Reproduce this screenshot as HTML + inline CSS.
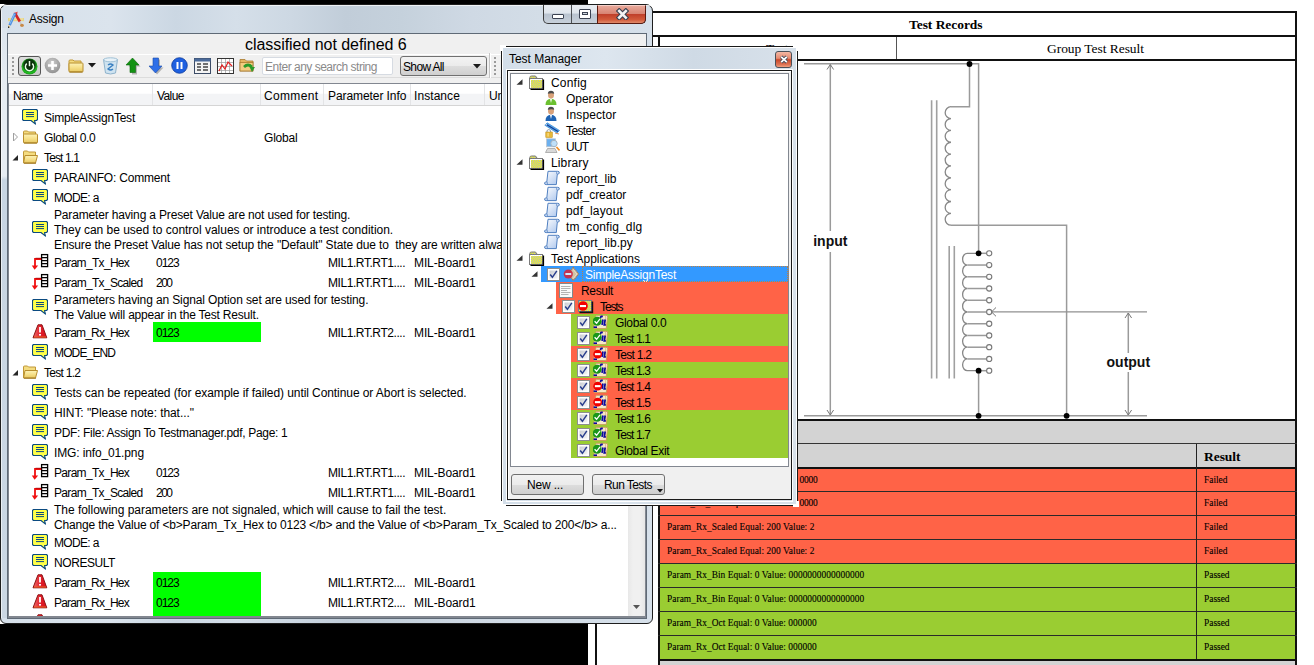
<!DOCTYPE html>
<html><head><meta charset="utf-8">
<style>
*{box-sizing:border-box;margin:0;padding:0}
html,body{width:1314px;height:665px;overflow:hidden;background:#fff;position:relative;font-family:"Liberation Sans",sans-serif;font-size:12px;color:#000}
.a{position:absolute}
.t{position:absolute;white-space:pre;line-height:15px;letter-spacing:-0.05px}
/* PDF */
#pdf{position:absolute;left:0;top:0;width:1314px;height:665px}
.ps{font-family:"Liberation Serif",serif}
.hl{position:absolute;background:#111}
.pr{position:absolute;left:660px;width:635px;height:23px}
.pr .tx{position:absolute;left:7px;top:5.5px;font-family:"Liberation Serif",serif;font-size:9.4px;white-space:pre;color:#000;-webkit-text-stroke:0.1px #000}
.pr .rs{position:absolute;left:544px;top:5.5px;font-family:"Liberation Serif",serif;font-size:9.4px;white-space:pre;color:#000;-webkit-text-stroke:0.1px #000}
.red{background:#ff6347}
.grn{background:#9acd32}
/* window */
.win{position:absolute;border:1px solid #1e1e1e;background:linear-gradient(90deg,#d5dfe9,#dce5ee 30%,#cfdae5 60%,#d6e0ea);border-radius:6px}
</style></head>
<body>
<svg width="0" height="0" style="position:absolute">
<defs>
  <linearGradient id="gfold" x1="0" y1="0" x2="0" y2="1"><stop offset="0" stop-color="#fdf3b8"/><stop offset="0.5" stop-color="#f6e08a"/><stop offset="1" stop-color="#e8c860"/></linearGradient>
 <linearGradient id="gwarn" x1="0" y1="0" x2="1" y2="0"><stop offset="0" stop-color="#f07070"/><stop offset="0.5" stop-color="#e0202c"/><stop offset="1" stop-color="#d8101c"/></linearGradient>
 <symbol id="ibub" viewBox="0 0 16 16">
  <path d="M1.5,0.5 H14.5 L15.5,1.5 V10.5 L14.5,11.5 H12.5 L13.5,15.2 L9,11.5 H1.5 L0.5,10.5 V1.5 Z" fill="#ffff48" stroke="#0b4a80" stroke-width="1.1" stroke-linejoin="round"/>
  <path d="M4,3.5 H12 M4,5.5 H12 M4,7.6 H12" stroke="#0b4a80" stroke-width="1"/>
 </symbol>
 <symbol id="ifold" viewBox="0 0 16 16">
  <path d="M1.5,12.5 V3 Q1.5,2 2.5,2 H5.5 L6.5,3 H13.5 V12.5 Z" fill="#f4dc80" stroke="#c09838" stroke-width="1"/>
  <rect x="1.5" y="5" width="14" height="9" rx="0.8" fill="url(#gfold)" stroke="#b88e2e" stroke-width="1"/>
  <path d="M2,14 H15" stroke="#a07820" stroke-width="1"/>
 </symbol>
 <symbol id="ifoldo" viewBox="0 0 16 16">
  <path d="M1.5,13 V3 Q1.5,2 2.5,2 H5.5 L6.5,3 H13.5 V7 Z" fill="#f4dc80" stroke="#c09838" stroke-width="1"/>
  <path d="M1.5,14 L3,6.5 H15.5 L13.5,14 Z" fill="url(#gfold)" stroke="#b88e2e" stroke-width="1" stroke-linejoin="round"/>
  <path d="M2,14.2 H14" stroke="#a07820" stroke-width="1"/>
 </symbol>
 <symbol id="itx" viewBox="0 0 20 20">
  <rect x="12.6" y="2.6" width="6" height="12" fill="#fff" stroke="#000" stroke-width="1.3"/>
  <path d="M12.6,5.6 H18.6 M12.6,8.6 H18.6 M12.6,11.6 H18.6" stroke="#000" stroke-width="1.1"/>
  <path d="M12.2,7 H6 V14.2" fill="none" stroke="#f01010" stroke-width="1.8"/>
  <path d="M2.8,13.6 H9.2 L5.6,17.8 Z" fill="#f01010"/>
  <path d="M6.5,6.2 H12" stroke="#8a0000" stroke-width="0.6"/>
 </symbol>
 <symbol id="iwarn" viewBox="0 0 20 20">
  <path d="M9,2.8 H13 L17.8,15.8 H4 Z" fill="url(#gwarn)" stroke="#8e1414" stroke-width="1" stroke-linejoin="round"/>
  <path d="M5,15 H17" stroke="#f06020" stroke-width="1"/>
  <path d="M11,5 V10.5" stroke="#fff" stroke-width="1.8"/>
  <rect x="10" y="12" width="2" height="1.6" fill="#fff"/>
 </symbol>
 <symbol id="tric" viewBox="0 0 8 10"><path d="M1.5,1 L5.5,5 L1.5,9 Z" fill="none" stroke="#a0a0a0" stroke-width="1"/></symbol>
 <symbol id="trio" viewBox="0 0 8 8"><path d="M6,1 V6.5 H0.5 Z" fill="#262626"/></symbol>
</defs>
</svg>
<svg width="0" height="0" style="position:absolute">
<defs>
 <pattern id="pchk" width="2" height="2" patternUnits="userSpaceOnUse"><rect width="2" height="2" fill="#ffff10"/><rect width="1" height="1" fill="#aab0c4"/><rect x="1" y="1" width="1" height="1" fill="#aab0c4"/></pattern>
 <linearGradient id="gscroll" x1="0" y1="0" x2="1" y2="1"><stop offset="0" stop-color="#fff"/><stop offset="1" stop-color="#a9c4ec"/></linearGradient>
 <linearGradient id="gcb" x1="0" y1="0" x2="1" y2="1"><stop offset="0" stop-color="#c9ccd2"/><stop offset="1" stop-color="#f6f6f6"/></linearGradient>
 <symbol id="tfold" viewBox="0 0 16 16">
  <path d="M0.8,3.5 V2.5 Q0.8,1 2.5,1 H6.5 L8.2,3.2" fill="url(#pchk)" stroke="#787878" stroke-width="1"/>
  <rect x="0.5" y="3.5" width="13" height="10" fill="url(#pchk)" stroke="#7a7a7a"/>
  <path d="M1.5,13 V4.5 H13" fill="none" stroke="#fff" stroke-width="1"/>
  <path d="M1.5,14.4 H14.4 V4.5" fill="none" stroke="#000" stroke-width="1.4"/>
 </symbol>
 <symbol id="ttri" viewBox="0 0 7 6"><path d="M6.5,0.3 V5.7 H0.5 Z" fill="#333"/></symbol>
 <symbol id="tperg" viewBox="0 0 12 16">
  <ellipse cx="6" cy="5" rx="3" ry="3.6" fill="#d9a27a"/><path d="M2.8,3.8 Q3,0.8 6,0.8 Q9,0.8 9.2,3.8 Q7,2.6 2.8,3.8 Z" fill="#4a4a4a"/>
  <path d="M0.5,15 Q0.5,9 6,8.8 Q11.5,9 11.5,15 Z" fill="#6cc030"/><path d="M5,9 L6,13 L7,9 Z" fill="#fff"/>
 </symbol>
 <symbol id="tperb" viewBox="0 0 12 16">
  <ellipse cx="6" cy="5" rx="3" ry="3.6" fill="#d9a27a"/><path d="M2.8,3.8 Q3,0.8 6,0.8 Q9,0.8 9.2,3.8 Q7,2.6 2.8,3.8 Z" fill="#4a4a4a"/>
  <path d="M0.5,15 Q0.5,9 6,8.8 Q11.5,9 11.5,15 Z" fill="#1f64b4"/><path d="M5,9 L6,13 L7,9 Z" fill="#fff"/>
 </symbol>
 <symbol id="ttester" viewBox="0 0 16 16">
  <path d="M0.8,3.2 L3.2,0.8 L15.5,8.5 L13,11 Z" fill="#58aef0" stroke="#2a78c8" stroke-width="0.6"/>
  <path d="M2.5,2.5 L14,9.5" stroke="#1a3a90" stroke-width="1.2"/>
  <path d="M1.5,2 L3,3" stroke="#fff" stroke-width="0.8"/>
  <path d="M11,11 L15,12" stroke="#e09050" stroke-width="1"/>
  <path d="M3,10 V8.5 Q4.8,6.5 6.6,8.5 V10" fill="none" stroke="#8a9aaa" stroke-width="1"/>
  <rect x="1.8" y="10" width="6.6" height="5.5" fill="#e8b838" stroke="#b88a18" stroke-width="0.5"/>
  <rect x="3.5" y="11" width="1.2" height="3.5" fill="#f8e090"/>
 </symbol>
 <symbol id="tuut" viewBox="0 0 16 16">
  <rect x="2.5" y="0.8" width="9" height="8" fill="#6cb0ee" stroke="#c0c8d0" stroke-width="0.8"/>
  <circle cx="10" cy="5.5" r="3.2" fill="#bfe0fa" stroke="#a8b4c0" stroke-width="1"/>
  <path d="M1.5,14.5 L3.5,10.5 H11 L13,14.5 Z" fill="#d8d8d8" stroke="#9a9a9a" stroke-width="0.7"/>
  <path d="M12.5,9 L15.5,12.5" stroke="#f08a20" stroke-width="1.6"/>
 </symbol>
 <symbol id="tscroll" viewBox="0 0 16 16">
  <path d="M4,1.3 H13.6 Q15.6,1.3 15.3,3 Q15,4.3 13.3,4.1 L12.3,14.6 H2.2 Q0.3,14.6 0.6,12.9 Q0.9,11.7 2.8,11.9 Z" fill="url(#gscroll)" stroke="#4f7fc0" stroke-width="1"/>
  <path d="M13.3,4.1 Q12.2,3.8 12.6,2.2" fill="none" stroke="#4f7fc0" stroke-width="0.8"/>
  <path d="M2.8,11.9 Q3.8,12.6 3.2,14.3" fill="none" stroke="#4f7fc0" stroke-width="0.8"/>
 </symbol>
 <symbol id="tcb" viewBox="0 0 13 13">
  <rect x="0.5" y="0.5" width="12" height="12" fill="#fff" stroke="#8e8f8f"/>
  <rect x="2.5" y="2.5" width="8" height="8" fill="url(#gcb)"/>
  <path d="M3.2,6.5 L5.4,9.3 L9.8,2.8" fill="none" stroke="#2a3f8e" stroke-width="1.5"/>
 </symbol>
 <symbol id="tstopd" viewBox="0 0 16 16">
  <path d="M10.3,1.5 L15.5,8 L10.3,14.5 L5,8 Z" fill="#d0c4a8" stroke="#b07a48" stroke-width="1.1" stroke-dasharray="1.2 0.7"/>
  <path d="M10.3,3.5 L13.8,8 L10.3,12.5" fill="none" stroke="#e8e0cc" stroke-width="1"/>
  <circle cx="5.3" cy="8" r="4.6" fill="#cc2a46" opacity="0.92"/>
  <rect x="2.4" y="7" width="5.8" height="2" fill="#cfe8ff"/>
 </symbol>
 <symbol id="tdoc" viewBox="0 0 14 15">
  <rect x="0.5" y="0.5" width="13" height="14" fill="#fafafa" stroke="#7e8a90"/>
  <path d="M2,3.5 H11.5 M2,5.5 H11.5 M2,7.5 H8 M2,9.5 H11.5 M2,11.5 H9.5" stroke="#b4b4b4" stroke-width="1"/>
 </symbol>
 <symbol id="tstopf" viewBox="0 0 16 16">
  <rect x="0.5" y="2.5" width="13" height="11" fill="url(#pchk)" stroke="#7a8088"/>
  <path d="M1.5,14.4 H14.4 V3.5" fill="none" stroke="#111" stroke-width="1.6"/>
  <circle cx="5" cy="8" r="4.8" fill="#f40000"/>
  <rect x="2" y="7" width="6" height="2.1" fill="#fff"/>
 </symbol>
 <symbol id="tsmok" viewBox="0 0 16 16">
  <path d="M3.5,1.3 H13 Q15.2,1.3 14.6,3.5 L13.2,14.6 H2 Q0.4,14.6 0.9,13 L2.8,2.5 Q3,1.3 3.5,1.3 Z" fill="#f6e8c8" stroke="#c89a58" stroke-width="0.9"/>
  <path d="M12.6,2 V12" stroke="#d8b070" stroke-width="0.7"/>
  <path d="M9.8,2.6 Q7.4,1.8 7.6,4.2" fill="none" stroke="#0a0aa0" stroke-width="1.8"/>
  <path d="M10,5.5 L9,10.8 M12.2,5.5 L11.2,10.8 H12.8" fill="none" stroke="#0a0aa0" stroke-width="1.7"/>
  <path d="M0.6,13.2 H4" stroke="#0a0aa0" stroke-width="1.6"/>
  <circle cx="4.2" cy="7.3" r="4.5" fill="#1a961a"/>
  <path d="M1.6,7.3 L3.6,9.3 L7,4.8" fill="none" stroke="#fff" stroke-width="1.3"/>
 </symbol>
 <symbol id="tsmfail" viewBox="0 0 16 16">
  <path d="M3.5,1.3 H13 Q15.2,1.3 14.6,3.5 L13.2,14.6 H2 Q0.4,14.6 0.9,13 L2.8,2.5 Q3,1.3 3.5,1.3 Z" fill="#f6e8c8" stroke="#c89a58" stroke-width="0.9"/>
  <path d="M12.6,2 V12" stroke="#d8b070" stroke-width="0.7"/>
  <path d="M9.8,2.6 Q7.4,1.8 7.6,4.2" fill="none" stroke="#0a0aa0" stroke-width="1.8"/>
  <path d="M10,5.5 L9,10.8 M12.2,5.5 L11.2,10.8 H12.8" fill="none" stroke="#0a0aa0" stroke-width="1.7"/>
  <path d="M0.6,13.2 H4" stroke="#0a0aa0" stroke-width="1.6"/>
  <circle cx="4.7" cy="8.2" r="4.4" fill="#f00000"/>
  <rect x="1.9" y="7.1" width="5.6" height="2.1" fill="#fff"/>
 </symbol>
</defs>
</svg>

<!-- background pieces -->
<div class="a" style="left:0;top:0;width:588px;height:4px;background:#000"></div>
<div class="a" style="left:0;top:624px;width:588px;height:41px;background:#000"></div>
<div class="a" style="left:595px;top:624px;width:2px;height:41px;background:#111"></div>

<!-- PDF table -->
<div id="pdf">
  <div class="hl" style="left:652px;top:11px;width:645px;height:2px"></div>
  <div class="hl" style="left:658px;top:35px;width:2px;height:630px"></div>
  <div class="hl" style="left:1295px;top:11px;width:2px;height:654px"></div>
  <div class="t ps" style="left:909px;top:17px;font-size:13.5px;font-weight:bold;line-height:16px">Test Records</div>
  <div class="hl" style="left:652px;top:35px;width:645px;height:2px"></div>
  <div class="a" style="left:896px;top:37px;width:1px;height:22px;background:#555"></div>
  <div class="t ps" id="testhdr" style="left:766px;top:41px;font-size:13.5px;line-height:16px">Test</div>
  <div class="t ps" style="left:1047px;top:41px;font-size:13.5px;line-height:16px">Group Test Result</div>
  <div class="hl" style="left:658px;top:59px;width:639px;height:2px"></div>
  <!-- diagram placeholder -->
  <svg class="a" style="left:0;top:0" width="1314" height="665" id="diag">
<path d="M804,63.8 H978.6 V253.3" stroke="#9a9a9a" stroke-width="1.5" fill="none"/>
<path d="M830.3,64.5 L830.3,231" stroke="#9a9a9a" stroke-width="1.5" fill="none"/>
<path d="M830.3,252 L830.3,415" stroke="#9a9a9a" stroke-width="1.5" fill="none"/>
<path d="M827,69.5 L830.3,64.5 L833.6,69.5" stroke="#777" stroke-width="1" fill="none"/>
<path d="M827,410 L830.3,415 L833.6,410" stroke="#777" stroke-width="1" fill="none"/>
<path d="M969.5,64 V106.7 H951" stroke="#9a9a9a" stroke-width="1.5" fill="none"/>
<path d="M951,106.7 A5.8,5.9 0 0 0 951,118.55 A5.8,5.9 0 0 0 951,130.40 A5.8,5.9 0 0 0 951,142.25 A5.8,5.9 0 0 0 951,154.10 A5.8,5.9 0 0 0 951,165.95 A5.8,5.9 0 0 0 951,177.80 A5.8,5.9 0 0 0 951,189.65 A5.8,5.9 0 0 0 951,201.50 A5.8,5.9 0 0 0 951,213.35 A5.8,5.9 0 0 0 951,225.20" stroke="#888" stroke-width="1.3" fill="none"/>
<path d="M951,225.2 H1066.6 V415.8" stroke="#9a9a9a" stroke-width="1.5" fill="none"/>
<path d="M931.6,100.3 L931.6,378.5" stroke="#a0a0a0" stroke-width="1.6" fill="none"/>
<path d="M936.7,100.3 L936.7,378.5" stroke="#a0a0a0" stroke-width="1.6" fill="none"/>
<path d="M949.2,246 L949.2,378.5" stroke="#a0a0a0" stroke-width="1.6" fill="none"/>
<path d="M954.3,246 L954.3,378.5" stroke="#a0a0a0" stroke-width="1.6" fill="none"/>
<path d="M978.6,253.3 H967.3 A4.7,5.87 0 0 0 967.3,265.04 A4.7,5.87 0 0 0 967.3,276.78 A4.7,5.87 0 0 0 967.3,288.52 A4.7,5.87 0 0 0 967.3,300.26 A4.7,5.87 0 0 0 967.3,312.00 A4.7,5.87 0 0 0 967.3,323.74 A4.7,5.87 0 0 0 967.3,335.48 A4.7,5.87 0 0 0 967.3,347.22 A4.7,5.87 0 0 0 967.3,358.96 A4.7,5.87 0 0 0 967.3,370.70 H978.6" stroke="#888" stroke-width="1.3" fill="none"/>
<path d="M978.6,253.3 L986.5,253.3" stroke="#9a9a9a" stroke-width="1.5" fill="none"/>
<circle cx="989.2" cy="253.30" r="2.6" fill="#fff" stroke="#777" stroke-width="1.1"/>
<path d="M967.3,265.04 L986.5,265.04" stroke="#9a9a9a" stroke-width="1.5" fill="none"/>
<circle cx="989.2" cy="265.04" r="2.6" fill="#fff" stroke="#777" stroke-width="1.1"/>
<path d="M967.3,276.78000000000003 L986.5,276.78000000000003" stroke="#9a9a9a" stroke-width="1.5" fill="none"/>
<circle cx="989.2" cy="276.78" r="2.6" fill="#fff" stroke="#777" stroke-width="1.1"/>
<path d="M967.3,288.52 L986.5,288.52" stroke="#9a9a9a" stroke-width="1.5" fill="none"/>
<circle cx="989.2" cy="288.52" r="2.6" fill="#fff" stroke="#777" stroke-width="1.1"/>
<path d="M967.3,300.26 L986.5,300.26" stroke="#9a9a9a" stroke-width="1.5" fill="none"/>
<circle cx="989.2" cy="300.26" r="2.6" fill="#fff" stroke="#777" stroke-width="1.1"/>
<path d="M967.3,312.0 L986.5,312.0" stroke="#9a9a9a" stroke-width="1.5" fill="none"/>
<circle cx="989.2" cy="312.00" r="2.6" fill="#fff" stroke="#777" stroke-width="1.1"/>
<path d="M967.3,323.74 L986.5,323.74" stroke="#9a9a9a" stroke-width="1.5" fill="none"/>
<circle cx="989.2" cy="323.74" r="2.6" fill="#fff" stroke="#777" stroke-width="1.1"/>
<path d="M967.3,335.48 L986.5,335.48" stroke="#9a9a9a" stroke-width="1.5" fill="none"/>
<circle cx="989.2" cy="335.48" r="2.6" fill="#fff" stroke="#777" stroke-width="1.1"/>
<path d="M967.3,347.22 L986.5,347.22" stroke="#9a9a9a" stroke-width="1.5" fill="none"/>
<circle cx="989.2" cy="347.22" r="2.6" fill="#fff" stroke="#777" stroke-width="1.1"/>
<path d="M967.3,358.96000000000004 L986.5,358.96000000000004" stroke="#9a9a9a" stroke-width="1.5" fill="none"/>
<circle cx="989.2" cy="358.96" r="2.6" fill="#fff" stroke="#777" stroke-width="1.1"/>
<path d="M978.6,370.70000000000005 L986.5,370.70000000000005" stroke="#9a9a9a" stroke-width="1.5" fill="none"/>
<circle cx="989.2" cy="370.70" r="2.6" fill="#fff" stroke="#777" stroke-width="1.1"/>
<path d="M978.6,370.7 L978.6,415.8" stroke="#9a9a9a" stroke-width="1.5" fill="none"/>
<path d="M992,311.9 L1147,311.9" stroke="#909090" stroke-width="1.2" fill="none"/>
<path d="M996,307.5 L991.5,311.9 L996,316.3" stroke="#777" stroke-width="1" fill="none"/>
<path d="M1128.3,313 L1128.3,353" stroke="#9a9a9a" stroke-width="1.5" fill="none"/>
<path d="M1128.3,372 L1128.3,415" stroke="#9a9a9a" stroke-width="1.5" fill="none"/>
<path d="M1125,318 L1128.3,313 L1131.6,318" stroke="#777" stroke-width="1" fill="none"/>
<path d="M1125,410 L1128.3,415 L1131.6,410" stroke="#777" stroke-width="1" fill="none"/>
<path d="M804,415.8 H1147" stroke="#9a9a9a" stroke-width="1.6" fill="none"/>
<circle cx="969.5" cy="64" r="2.9" fill="#000"/>
<circle cx="978.6" cy="253.3" r="2.9" fill="#000"/>
<circle cx="978.6" cy="370.7" r="2.9" fill="#000"/>
<circle cx="978.6" cy="415.8" r="2.9" fill="#000"/>
<circle cx="1066.6" cy="415.8" r="2.9" fill="#000"/>
<text x="830.3" y="246.3" text-anchor="middle" font-family="Liberation Sans" font-weight="bold" font-size="14" fill="#111">input</text>
<text x="1128.3" y="366.7" text-anchor="middle" font-family="Liberation Sans" font-weight="bold" font-size="14" fill="#111">output</text>
</svg>
  <div class="hl" style="left:658px;top:419px;width:639px;height:2px"></div>
  <div class="a" style="left:660px;top:421px;width:635px;height:22px;background:#d3d3d3"></div>
  <div class="hl" style="left:658px;top:443px;width:639px;height:1px;background:#333"></div>
  <div class="a" style="left:660px;top:444px;width:635px;height:23px;background:#d3d3d3"></div>
  <div class="t ps" style="left:1204px;top:449px;font-size:13.5px;font-weight:bold;line-height:16px">Result</div>
  <div class="hl" style="left:658px;top:467px;width:639px;height:2px"></div>
  <div class="pr red" style="top:469px"><div class="tx" style="letter-spacing:-0.12px">Param_Rx_Hex Equal: 0123 Value: 0000</div><div class="rs">Failed</div></div>
  <div class="pr red" style="top:492px"><div class="tx" style="letter-spacing:-0.12px">Param_Rx_Hex Equal: 0123 Value: 0000</div><div class="rs">Failed</div></div>
  <div class="pr red" style="top:516px"><div class="tx" style="letter-spacing:0.05px">Param_Rx_Scaled Equal: 200 Value: 2</div><div class="rs">Failed</div></div>
  <div class="pr red" style="top:540px"><div class="tx" style="letter-spacing:0.05px">Param_Rx_Scaled Equal: 200 Value: 2</div><div class="rs">Failed</div></div>
  <div class="pr grn" style="top:564px"><div class="tx" style="letter-spacing:0.045px">Param_Rx_Bin Equal: 0 Value: 0000000000000000</div><div class="rs">Passed</div></div>
  <div class="pr grn" style="top:588px"><div class="tx" style="letter-spacing:0.045px">Param_Rx_Bin Equal: 0 Value: 0000000000000000</div><div class="rs">Passed</div></div>
  <div class="pr grn" style="top:612px"><div class="tx" style="letter-spacing:0.04px">Param_Rx_Oct Equal: 0 Value: 000000</div><div class="rs">Passed</div></div>
  <div class="pr grn" style="top:636px"><div class="tx" style="letter-spacing:0.04px">Param_Rx_Oct Equal: 0 Value: 000000</div><div class="rs">Passed</div></div>
  <div class="hl" style="left:658px;top:491px;width:639px;height:1px;background:#2a2a2a"></div>
  <div class="hl" style="left:658px;top:515px;width:639px;height:1px;background:#2a2a2a"></div>
  <div class="hl" style="left:658px;top:539px;width:639px;height:1px;background:#2a2a2a"></div>
  <div class="hl" style="left:658px;top:563px;width:639px;height:1px;background:#2a2a2a"></div>
  <div class="hl" style="left:658px;top:587px;width:639px;height:1px;background:#2a2a2a"></div>
  <div class="hl" style="left:658px;top:611px;width:639px;height:1px;background:#2a2a2a"></div>
  <div class="hl" style="left:658px;top:635px;width:639px;height:1px;background:#2a2a2a"></div>
  <div class="hl" style="left:658px;top:659px;width:639px;height:2px"></div>
  <div class="a" style="left:660px;top:661px;width:635px;height:4px;background:#d3d3d3"></div>
  <div class="a" style="left:1196px;top:444px;width:1px;height:215px;background:#222"></div>
</div>

<!-- ASSIGN WINDOW -->
<div class="win" style="left:0;top:4px;width:653px;height:620px;border-radius:7px 7px 6px 6px;background:linear-gradient(90deg,#d6e0ea 0px,#dbe4ed 110px,#cbd7e3 175px,#d5dfe9 235px,#cdd8e3 290px,#c1cdd9 345px,#c5d1dc 400px,#cfd9e4 470px,#d3dde7 540px,#d6e0ea 653px)"></div>
<div class="a" style="left:1px;top:5px;width:651px;height:1px;background:rgba(255,255,255,.7)"></div>
<div class="a" style="left:1px;top:28px;width:6px;height:590px;background:linear-gradient(#dde5ed 0,#e6ecf2 60px,#e6ecf2 148px,#c8d5e2 152px,#cbd7e3 100%)"></div>
<div class="a" style="left:1px;top:8px;width:1px;height:610px;background:rgba(255,255,255,.6)"></div>
<!-- app icon -->
<svg class="a" style="left:8px;top:11px" width="17" height="17" viewBox="0 0 17 17">
 <rect x="0" y="7" width="16" height="3.2" fill="#e6d588"/>
 <path d="M1,8 H15" stroke="#f4eab8" stroke-width="0.8"/>
 <path d="M11.5,10.5 L13.5,13.5" stroke="#c8c8c8" stroke-width="1.5"/>
 <ellipse cx="14" cy="14.3" rx="1.9" ry="1.6" fill="#c88a48"/>
 <path d="M6.8,2 L11.8,10.5" stroke="#d42424" stroke-width="2.6"/>
 <path d="M5.5,0.8 L7.2,2.2 L9.5,0.4 L9.3,2.8 L7,3" fill="#e02a2a"/>
 <path d="M7.2,2.3 L1.6,14.2" stroke="#4a8ee0" stroke-width="2.6"/>
 <path d="M6.5,3 L2,12.8" stroke="#9cc8f4" stroke-width="0.8"/>
 <path d="M1.6,14.2 L0.6,16.2" stroke="#e8d0a0" stroke-width="2"/>
 <path d="M0.9,15.6 L0.3,16.8" stroke="#222" stroke-width="1.4"/>
</svg>
<div class="t" style="left:29px;top:12px;color:#000"><span style="letter-spacing:-0.200px">Assign</span></div>
<!-- caption buttons -->
<div class="a" style="left:543px;top:5px;width:103px;height:19px;border:1px solid #3c3c3c;border-top:none;border-radius:0 0 5px 5px;overflow:hidden;background:linear-gradient(#e9edf2,#dfe5ec 45%,#b9c3cf 50%,#c7d0da)"></div>
<div class="a" style="left:571px;top:5px;width:1px;height:18px;background:#4b4f54"></div>
<div class="a" style="left:597px;top:5px;width:49px;height:19px;border:1px solid #5a1a10;border-top:1px solid #f6d0c8;border-radius:0 0 5px 0;background:linear-gradient(#e8a89a,#d88472 45%,#c0402a 50%,#d25a3a 80%,#e08a6a)"></div>
<div class="a" style="left:552px;top:14px;width:12px;height:5px;border:1.5px solid #3b4252;border-radius:1px;background:#fff"></div>
<div class="a" style="left:579px;top:9px;width:12px;height:10px;border:1.5px solid #3b4252;border-radius:1px;background:#fff"></div>
<div class="a" style="left:582px;top:12px;width:6px;height:3px;border:1.5px solid #3b4252;background:#cfd6de"></div>
<svg class="a" style="left:616px;top:8px" width="13" height="12" viewBox="0 0 13 12"><path d="M3.2,3 L9.8,9.6 M9.8,3 L3.2,9.6" stroke="#3a4150" stroke-width="4.8" stroke-linecap="square"/><path d="M3.2,3 L9.8,9.6 M9.8,3 L3.2,9.6" stroke="#f4f4f4" stroke-width="2.6" stroke-linecap="square"/></svg>
<!-- client -->
<div class="a" style="left:7px;top:33px;width:640px;height:586px;border:1px solid #5f6a76;background:#f0f0f0"></div>
<div class="t" style="left:245px;top:35px;font-size:16px;line-height:19px">classified not defined 6</div>
<!-- toolbar -->
<div class="a" style="left:8px;top:54px;width:638px;height:1px;background:#fff"></div>
<div class="a" style="left:8px;top:77px;width:638px;height:1px;background:#dcdcdc"></div>
<div class="a" style="left:12px;top:57px;width:2px;height:19px;background:repeating-linear-gradient(#9a9a9a 0 2px,transparent 2px 4px)"></div>
<div class="a" style="left:489px;top:53px;width:1px;height:25px;background:#c4c4c4"></div><div class="a" style="left:490px;top:53px;width:1px;height:25px;background:#fff"></div>
<div class="a" style="left:494px;top:57px;width:2px;height:19px;background:repeating-linear-gradient(#9a9a9a 0 2px,transparent 2px 4px)"></div>
<!-- power button -->
<div class="a" style="left:18px;top:56px;width:23px;height:20px;border:1px solid #555;border-radius:3px;background:linear-gradient(#dedede,#c8c8c8)"></div>
<svg class="a" style="left:21px;top:58px" width="17" height="17" viewBox="0 0 17 17">
 <defs><radialGradient id="gpw" cx="0.5" cy="0.4" r="0.6"><stop offset="0" stop-color="#0a200a"/><stop offset="0.55" stop-color="#0a3a0a"/><stop offset="0.8" stop-color="#22c022"/><stop offset="1" stop-color="#1a9a1a"/></radialGradient>
 <radialGradient id="gpl" cx="0.45" cy="0.35" r="0.7"><stop offset="0" stop-color="#d0d0d0"/><stop offset="1" stop-color="#8c8c8c"/></radialGradient></defs>
 <circle cx="8.5" cy="8.5" r="8" fill="url(#gpw)"/>
 <path d="M5.8,5.6 A4.1,4.1 0 1 0 11.2,5.6" fill="none" stroke="#e8ffe8" stroke-width="1.4"/><path d="M8.5,3 V8.2" stroke="#e8ffe8" stroke-width="1.5"/>
</svg>
<svg class="a" style="left:44px;top:57px" width="17" height="17" viewBox="0 0 17 17">
 <circle cx="8.5" cy="8.5" r="7.8" fill="url(#gpl)"/>
 <path d="M8.5,4 V13 M4,8.5 H13" stroke="#fff" stroke-width="2.6"/>
</svg>
<svg class="a" style="left:67px;top:58px" width="17" height="16"><use href="#ifold"/></svg>
<svg class="a" style="left:88px;top:63px" width="8" height="5"><path d="M0,0 H8 L4,4.5 Z" fill="#1a1a1a"/></svg>
<svg class="a" style="left:102px;top:57px" width="17" height="18" viewBox="0 0 17 18">
 <path d="M1.5,2.5 L3.5,16 Q8.5,18 13.5,16 L15.5,2.5 Z" fill="#cfe3f0" stroke="#8fb3cc" stroke-width="1"/>
 <ellipse cx="8.5" cy="2.8" rx="7" ry="2" fill="#e8f2f8" stroke="#9fc0d6"/>
 <path d="M6,8 Q8.5,6 11,8 Q8.5,10 6,12 Q8.5,14 11,12" fill="none" stroke="#3a7fc0" stroke-width="1.4"/>
</svg>
<svg class="a" style="left:125px;top:57px" width="18" height="19" viewBox="0 0 18 19">
 <path d="M9,2.5 L15.5,9.5 H12 V17.5 H7 V9.5 H3.5 Z" fill="#9a9a9a" opacity="0.7"/>
 <path d="M7.5,1 L14,8 H10.5 V15.5 H5 V8 H1 Z" fill="#129212" stroke="#0a6a0a" stroke-width="0.6"/>
</svg>
<svg class="a" style="left:148px;top:57px" width="18" height="19" viewBox="0 0 18 19">
 <path d="M9,17.5 L15.5,10.5 H12 V2.5 H7 V10.5 H3.5 Z" fill="#9a9a9a" opacity="0.7"/>
 <path d="M7.5,16 L14,9 H10.5 V1 H5 V9 H1 Z" fill="#2f6fe8" stroke="#1a4aa8" stroke-width="0.6"/>
</svg>
<svg class="a" style="left:171px;top:57px" width="17" height="17" viewBox="0 0 17 17">
 <circle cx="8.5" cy="8.5" r="7.8" fill="#1d5fe0" stroke="#0c3a9a" stroke-width="0.8"/>
 <path d="M6.5,5 V12 M10.5,5 V12" stroke="#fff" stroke-width="2"/>
</svg>
<svg class="a" style="left:194px;top:58px" width="17" height="16" viewBox="0 0 17 16">
 <rect x="0.5" y="0.5" width="16" height="15" fill="#f4f4f4" stroke="#3c4c66"/>
 <rect x="0.5" y="0.5" width="16" height="3" fill="#4a6a9a"/>
 <path d="M3,6 H7 M3,9 H7 M3,12 H7 M9,6 H14 M9,9 H14 M9,12 H14" stroke="#444" stroke-width="1.3"/>
</svg>
<svg class="a" style="left:217px;top:58px" width="17" height="16" viewBox="0 0 17 16">
 <rect x="0.5" y="0.5" width="16" height="15" fill="#fff" stroke="#333"/>
 <path d="M4.5,1 V15 M8.5,1 V15 M12.5,1 V15 M1,4.5 H16 M1,8.5 H16 M1,12.5 H16" stroke="#9a9a9a" stroke-width="0.7"/>
 <path d="M2,13 L5,7 L8,11 L11,4 L15,8" fill="none" stroke="#e02020" stroke-width="1.2"/>
</svg>
<svg class="a" style="left:239px;top:57px" width="17" height="18" viewBox="0 0 17 18">
 <path d="M1,4 V2.5 H6 L7.5,4 H14 V14 H1 Z" fill="#e6b460" stroke="#a87a30" stroke-width="0.8"/>
 <rect x="1" y="5.5" width="13" height="8.5" fill="#f2cc80" stroke="#a87a30" stroke-width="0.8"/>
 <path d="M5,10 Q9,6 13,10" fill="none" stroke="#2a9a2a" stroke-width="2.6"/>
 <path d="M10.5,10 H16 L13,15 Z" fill="#2a9a2a"/>
</svg>
<!-- search box -->
<div class="a" style="left:262px;top:57px;width:131px;height:18px;border:1px solid #d6dbe2;border-radius:2px;background:#fff"></div>
<div class="t" style="left:265px;top:60px;color:#8a8a8a"><span style="letter-spacing:-0.500px">Enter any search string</span></div>
<!-- combo -->
<div class="a" style="left:400px;top:56px;width:87px;height:20px;border:1px solid #707070;border-radius:3px;background:linear-gradient(#f3f3f3,#ebebeb 50%,#dddddd 51%,#cfcfcf)"></div>
<div class="t" style="left:403px;top:60px"><span style="letter-spacing:-0.643px">Show All</span></div>
<svg class="a" style="left:473px;top:64px" width="8" height="5"><path d="M0,0 H8 L4,4.5 Z" fill="#1a1a1a"/></svg>
<!-- tree view -->
<div class="a" style="left:8px;top:83px;width:638px;height:535px;border:1px solid #828790;border-width:1px 1px 2px 1px;background:#fff;overflow:hidden"></div>
<div class="a" style="left:9px;top:84px;width:619px;height:21px;background:linear-gradient(#fff 0,#fff 45%,#f3f4f6 46%,#f3f4f6)"></div>
<div class="a" style="left:9px;top:105px;width:619px;height:1px;background:#d5d5d5"></div>
<div class="a" style="left:152px;top:84px;width:1px;height:21px;background:#e3e4e6"></div>
<div class="a" style="left:260px;top:84px;width:1px;height:21px;background:#e3e4e6"></div>
<div class="a" style="left:323px;top:84px;width:1px;height:21px;background:#e3e4e6"></div>
<div class="a" style="left:410px;top:84px;width:1px;height:21px;background:#e3e4e6"></div>
<div class="a" style="left:484px;top:84px;width:1px;height:21px;background:#e3e4e6"></div>
<div class="t" style="left:13px;top:89px"><span style="letter-spacing:-0.667px">Name</span></div>
<div class="t" style="left:157px;top:89px"><span style="letter-spacing:-0.600px">Value</span></div>
<div class="t" style="left:264px;top:89px"><span style="letter-spacing:0.333px">Comment</span></div>
<div class="t" style="left:328px;top:89px"><span style="letter-spacing:-0.077px">Parameter Info</span></div>
<div class="t" style="left:414px;top:89px"><span style="letter-spacing:0.071px">Instance</span></div>
<div class="t" style="left:489px;top:89px"><span style="letter-spacing:-0.200px">Unit</span></div>
<!-- scrollbar -->
<div class="a" style="left:628px;top:84px;width:17px;height:532px;background:linear-gradient(90deg,#e8e8e8,#f0f0f0 30%,#f0f0f0 70%,#e6e6e6)"></div>
<svg class="a" style="left:633px;top:605px" width="8" height="5"><path d="M0,0 H7 L3.5,4 Z" fill="#555"/></svg>
<div class="a" style="left:9px;top:106px;width:619px;height:510px;overflow:hidden">
<div class="a" style="left:-9px;top:-106px;width:660px;height:700px">
<svg class="a" style="left:22px;top:109px" width="16" height="16"><use href="#ibub"/></svg>
<div class="t" style="left:44px;top:111px"><span style="letter-spacing:-0.233px">SimpleAssignTest</span></div>
<svg class="a" style="left:12px;top:132px" width="8" height="10"><use href="#tric"/></svg>
<svg class="a" style="left:22px;top:129px" width="16" height="16"><use href="#ifold"/></svg>
<div class="t" style="left:44px;top:131px"><span style="letter-spacing:-0.333px">Global 0.0</span></div>
<div class="t" style="left:264px;top:131px"><span style="letter-spacing:-0.200px">Global</span></div>
<svg class="a" style="left:12px;top:154px" width="8" height="8"><use href="#trio"/></svg>
<svg class="a" style="left:22px;top:149px" width="16" height="16"><use href="#ifoldo"/></svg>
<div class="t" style="left:44px;top:151px"><span style="letter-spacing:-0.857px">Test 1.1</span></div>
<svg class="a" style="left:32px;top:169px" width="16" height="16"><use href="#ibub"/></svg>
<div class="t" style="left:54px;top:171px"><span style="letter-spacing:-0.188px">PARAINFO: Comment</span></div>
<svg class="a" style="left:32px;top:189px" width="16" height="16"><use href="#ibub"/></svg>
<div class="t" style="left:54px;top:191px"><span style="letter-spacing:-0.667px">MODE: a</span></div>
<svg class="a" style="left:32px;top:221px" width="16" height="16"><use href="#ibub"/></svg>
<div class="t" style="left:54px;top:208px"><span style="letter-spacing:-0.161px">Parameter having a Preset Value are not used for testing.</span>
<span style="letter-spacing:-0.016px">They can be used to control values or introduce a test condition.</span>
<span style="letter-spacing:-0.120px">Ensure the Preset Value has not setup the &quot;Default&quot; State due to  they are written always</span></div>
<svg class="a" style="left:29px;top:252px" width="20" height="20"><use href="#itx"/></svg>
<div class="t" style="left:54px;top:256px"><span style="letter-spacing:-0.682px">Param_Tx_Hex</span></div>
<div class="t" style="left:156px;top:256px"><span style="letter-spacing:-1.000px">0123</span></div>
<div class="t" style="left:328px;top:256px"><span style="letter-spacing:-0.429px">MIL1.RT.RT1....</span></div>
<div class="t" style="left:414px;top:256px"><span style="letter-spacing:-0.111px">MIL-Board1</span></div>
<svg class="a" style="left:29px;top:272px" width="20" height="20"><use href="#itx"/></svg>
<div class="t" style="left:54px;top:276px"><span style="letter-spacing:-0.679px">Param_Tx_Scaled</span></div>
<div class="t" style="left:156px;top:276px"><span style="letter-spacing:-1.500px">200</span></div>
<div class="t" style="left:328px;top:276px"><span style="letter-spacing:-0.429px">MIL1.RT.RT1....</span></div>
<div class="t" style="left:414px;top:276px"><span style="letter-spacing:-0.111px">MIL-Board1</span></div>
<svg class="a" style="left:32px;top:299px" width="16" height="16"><use href="#ibub"/></svg>
<div class="t" style="left:54px;top:293px"><span style="letter-spacing:-0.119px">Parameters having an Signal Option set are used for testing.</span>
<span style="letter-spacing:-0.200px">The Value will appear in the Test Result.</span></div>
<div class="a" style="left:153px;top:322px;width:108px;height:20px;background:#00ff00"></div>
<svg class="a" style="left:29px;top:322px" width="20" height="20"><use href="#iwarn"/></svg>
<div class="t" style="left:54px;top:326px"><span style="letter-spacing:-0.818px">Param_Rx_Hex</span></div>
<div class="t" style="left:156px;top:326px"><span style="letter-spacing:-1.000px">0123</span></div>
<div class="t" style="left:328px;top:326px"><span style="letter-spacing:-0.429px">MIL1.RT.RT2....</span></div>
<div class="t" style="left:414px;top:326px"><span style="letter-spacing:-0.111px">MIL-Board1</span></div>
<svg class="a" style="left:32px;top:344px" width="16" height="16"><use href="#ibub"/></svg>
<div class="t" style="left:54px;top:346px"><span style="letter-spacing:-0.857px">MODE_END</span></div>
<svg class="a" style="left:12px;top:369px" width="8" height="8"><use href="#trio"/></svg>
<svg class="a" style="left:22px;top:364px" width="16" height="16"><use href="#ifoldo"/></svg>
<div class="t" style="left:44px;top:366px"><span style="letter-spacing:-0.714px">Test 1.2</span></div>
<svg class="a" style="left:32px;top:384px" width="16" height="16"><use href="#ibub"/></svg>
<div class="t" style="left:54px;top:386px"><span style="letter-spacing:-0.078px">Tests can be repeated (for example if failed) until Continue or Abort is selected.</span></div>
<svg class="a" style="left:32px;top:404px" width="16" height="16"><use href="#ibub"/></svg>
<div class="t" style="left:54px;top:406px"><span style="letter-spacing:-0.074px">HINT: &quot;Please note: that...&quot;</span></div>
<svg class="a" style="left:32px;top:424px" width="16" height="16"><use href="#ibub"/></svg>
<div class="t" style="left:54px;top:426px"><span style="letter-spacing:-0.318px">PDF: File: Assign To Testmanager.pdf, Page: 1</span></div>
<svg class="a" style="left:32px;top:444px" width="16" height="16"><use href="#ibub"/></svg>
<div class="t" style="left:54px;top:446px"><span style="letter-spacing:-0.133px">IMG: info_01.png</span></div>
<svg class="a" style="left:29px;top:462px" width="20" height="20"><use href="#itx"/></svg>
<div class="t" style="left:54px;top:466px"><span style="letter-spacing:-0.682px">Param_Tx_Hex</span></div>
<div class="t" style="left:156px;top:466px"><span style="letter-spacing:-1.000px">0123</span></div>
<div class="t" style="left:328px;top:466px"><span style="letter-spacing:-0.429px">MIL1.RT.RT1....</span></div>
<div class="t" style="left:414px;top:466px"><span style="letter-spacing:-0.111px">MIL-Board1</span></div>
<svg class="a" style="left:29px;top:482px" width="20" height="20"><use href="#itx"/></svg>
<div class="t" style="left:54px;top:486px"><span style="letter-spacing:-0.679px">Param_Tx_Scaled</span></div>
<div class="t" style="left:156px;top:486px"><span style="letter-spacing:-1.500px">200</span></div>
<div class="t" style="left:328px;top:486px"><span style="letter-spacing:-0.429px">MIL1.RT.RT1....</span></div>
<div class="t" style="left:414px;top:486px"><span style="letter-spacing:-0.111px">MIL-Board1</span></div>
<svg class="a" style="left:32px;top:509px" width="16" height="16"><use href="#ibub"/></svg>
<div class="t" style="left:54px;top:503px"><span style="letter-spacing:-0.026px">The following parameters are not signaled, which will cause to fail the test.</span>
<span style="letter-spacing:-0.172px">Change the Value of &lt;b&gt;Param_Tx_Hex to 0123 &lt;/b&gt; and the Value of &lt;b&gt;Param_Tx_Scaled to 200&lt;/b&gt; a...</span></div>
<svg class="a" style="left:32px;top:534px" width="16" height="16"><use href="#ibub"/></svg>
<div class="t" style="left:54px;top:536px"><span style="letter-spacing:-0.667px">MODE: a</span></div>
<svg class="a" style="left:32px;top:554px" width="16" height="16"><use href="#ibub"/></svg>
<div class="t" style="left:54px;top:556px"><span style="letter-spacing:-0.429px">NORESULT</span></div>
<div class="a" style="left:153px;top:572px;width:108px;height:20px;background:#00ff00"></div>
<svg class="a" style="left:29px;top:572px" width="20" height="20"><use href="#iwarn"/></svg>
<div class="t" style="left:54px;top:576px"><span style="letter-spacing:-0.818px">Param_Rx_Hex</span></div>
<div class="t" style="left:156px;top:576px"><span style="letter-spacing:-1.000px">0123</span></div>
<div class="t" style="left:328px;top:576px"><span style="letter-spacing:-0.429px">MIL1.RT.RT2....</span></div>
<div class="t" style="left:414px;top:576px"><span style="letter-spacing:-0.111px">MIL-Board1</span></div>
<div class="a" style="left:153px;top:592px;width:108px;height:20px;background:#00ff00"></div>
<svg class="a" style="left:29px;top:592px" width="20" height="20"><use href="#iwarn"/></svg>
<div class="t" style="left:54px;top:596px"><span style="letter-spacing:-0.818px">Param_Rx_Hex</span></div>
<div class="t" style="left:156px;top:596px"><span style="letter-spacing:-1.000px">0123</span></div>
<div class="t" style="left:328px;top:596px"><span style="letter-spacing:-0.429px">MIL1.RT.RT2....</span></div>
<div class="t" style="left:414px;top:596px"><span style="letter-spacing:-0.111px">MIL-Board1</span></div>
<div class="a" style="left:153px;top:612px;width:108px;height:20px;background:#00ff00"></div>
<svg class="a" style="left:29px;top:612px" width="20" height="20"><use href="#iwarn"/></svg>
<div class="t" style="left:54px;top:616px"><span style="letter-spacing:-0.818px">Param_Rx_Hex</span></div>
<div class="t" style="left:156px;top:616px"><span style="letter-spacing:-1.000px">0123</span></div>
<div class="t" style="left:328px;top:616px"><span style="letter-spacing:-0.429px">MIL1.RT.RT2....</span></div>
<div class="t" style="left:414px;top:616px"><span style="letter-spacing:-0.111px">MIL-Board1</span></div>
</div></div>


<!-- TEST MANAGER -->
<div class="a" style="left:501px;top:46px;width:297px;height:460px;border:1px solid #1a1a1a"></div>
<div class="a" style="left:502px;top:47px;width:295px;height:458px;border:1px solid #fff;background:linear-gradient(90deg,#d3dee9,#dde6ef 35%,#cfdae5 65%,#d8e1ea)"></div>
<div class="a" style="left:500px;top:45px;width:6px;height:6px;background:#fff"></div>
<div class="a" style="left:793px;top:45px;width:6px;height:6px;background:#fff"></div>
<div class="a" style="left:500px;top:501px;width:6px;height:6px;background:#fff"></div>
<div class="a" style="left:793px;top:501px;width:6px;height:6px;background:#fff"></div>
<div class="a" style="left:502px;top:51px;width:1px;height:450px;background:#fff"></div>
<div class="a" style="left:506px;top:47px;width:287px;height:1px;background:#fff"></div>
<div class="a" style="left:796px;top:51px;width:1px;height:450px;background:#fff"></div>
<div class="a" style="left:506px;top:504px;width:287px;height:1px;background:#fff"></div>
<div class="a" style="left:503px;top:48px;width:293px;height:456px;background:linear-gradient(90deg,#d3dee9,#dde6ef 35%,#cfdae5 65%,#d8e1ea)"></div>
<div class="a" style="left:506px;top:69px;width:287px;height:433px;border:1px solid #fff"></div>
<div class="t" style="left:509px;top:52px"><span style="letter-spacing:-0.027px">Test Manager</span></div>
<div class="a" style="left:775px;top:51px;width:17px;height:17px;border:1px solid #4a5058;border-radius:3px;background:linear-gradient(#f4b8a4,#e68a70 42%,#c9482a 52%,#df7656 85%,#f0a080)"></div>
<svg class="a" style="left:779px;top:55px" width="10" height="9" viewBox="0 0 10 9"><path d="M2.2,1.8 L7.8,7.2 M7.8,1.8 L2.2,7.2" stroke="#3a4658" stroke-width="3.4"/><path d="M2.2,1.8 L7.8,7.2 M7.8,1.8 L2.2,7.2" stroke="#fff" stroke-width="1.8"/></svg>
<div class="a" style="left:507px;top:70px;width:285px;height:430px;border:1px solid #1a1a1a;background:#f0f0f0;box-shadow:inset 1px 1px 0 #fff"></div>
<div class="a" style="left:510px;top:73px;width:279px;height:394px;border:1px solid #828790;background:#fff"></div>
<div class="a" style="left:511px;top:474px;width:73px;height:21px;border:1px solid #707070;border-radius:3px;background:linear-gradient(#f2f2f2,#ebebeb 50%,#dddddd 51%,#cfcfcf)"></div>
<div class="t" style="left:527px;top:478px"><span style="letter-spacing:-0.167px">New ...</span></div>
<div class="a" style="left:592px;top:474px;width:73px;height:21px;border:1px solid #707070;border-radius:3px;background:linear-gradient(#f2f2f2,#ebebeb 50%,#dddddd 51%,#cfcfcf)"></div>
<div class="t" style="left:604px;top:478px"><span style="letter-spacing:-0.588px">Run Tests</span></div>
<svg class="a" style="left:657px;top:489px" width="6" height="4"><path d="M0,0 H6 L3,3.5 Z" fill="#111"/></svg>

<svg class="a" style="left:516px;top:79px" width="7" height="6"><use href="#ttri"/></svg>
<svg class="a" style="left:529px;top:75px" width="16" height="16"><use href="#tfold"/></svg>
<div class="t" style="left:551px;top:75px;line-height:16px;color:#000"><span style="letter-spacing:0.200px">Config</span></div>
<svg class="a" style="left:545px;top:90px" width="12" height="16"><use href="#tperg"/></svg>
<div class="t" style="left:566px;top:91px;line-height:16px;color:#000">Operator</div>
<svg class="a" style="left:545px;top:106px" width="12" height="16"><use href="#tperb"/></svg>
<div class="t" style="left:566px;top:107px;line-height:16px;color:#000"><span style="letter-spacing:0.125px">Inspector</span></div>
<svg class="a" style="left:544px;top:122px" width="16" height="16"><use href="#ttester"/></svg>
<div class="t" style="left:566px;top:123px;line-height:16px;color:#000"><span style="letter-spacing:-0.600px">Tester</span></div>
<svg class="a" style="left:544px;top:138px" width="16" height="16"><use href="#tuut"/></svg>
<div class="t" style="left:566px;top:139px;line-height:16px;color:#000"><span style="letter-spacing:-0.750px">UUT</span></div>
<svg class="a" style="left:516px;top:159px" width="7" height="6"><use href="#ttri"/></svg>
<svg class="a" style="left:529px;top:155px" width="16" height="16"><use href="#tfold"/></svg>
<div class="t" style="left:551px;top:155px;line-height:16px;color:#000"><span style="letter-spacing:0.133px">Library</span></div>
<svg class="a" style="left:544px;top:170px" width="16" height="16"><use href="#tscroll"/></svg>
<div class="t" style="left:566px;top:171px;line-height:16px;color:#000"><span style="letter-spacing:0.056px">report_lib</span></div>
<svg class="a" style="left:544px;top:186px" width="16" height="16"><use href="#tscroll"/></svg>
<div class="t" style="left:566px;top:187px;line-height:16px;color:#000"><span style="letter-spacing:-0.040px">pdf_creator</span></div>
<svg class="a" style="left:544px;top:202px" width="16" height="16"><use href="#tscroll"/></svg>
<div class="t" style="left:566px;top:203px;line-height:16px;color:#000"><span style="letter-spacing:0.167px">pdf_layout</span></div>
<svg class="a" style="left:544px;top:218px" width="16" height="16"><use href="#tscroll"/></svg>
<div class="t" style="left:566px;top:219px;line-height:16px;color:#000"><span style="letter-spacing:0.117px">tm_config_dlg</span></div>
<svg class="a" style="left:544px;top:234px" width="16" height="16"><use href="#tscroll"/></svg>
<div class="t" style="left:566px;top:235px;line-height:16px;color:#000"><span style="letter-spacing:0.067px">report_lib.py</span></div>
<svg class="a" style="left:516px;top:255px" width="7" height="6"><use href="#ttri"/></svg>
<svg class="a" style="left:529px;top:251px" width="16" height="16"><use href="#tfold"/></svg>
<div class="t" style="left:551px;top:251px;line-height:16px;color:#000"><span style="letter-spacing:-0.031px">Test Applications</span></div>
<div class="a" style="left:541px;top:266px;width:247px;height:16px;background:#3399ff"></div>
<svg class="a" style="left:531px;top:271px" width="7" height="6"><use href="#ttri"/></svg>
<svg class="a" style="left:547px;top:268px" width="13" height="13"><use href="#tcb"/></svg>
<svg class="a" style="left:563px;top:266px" width="16" height="16"><use href="#tstopd"/></svg>
<div class="t" style="left:585px;top:267px;line-height:16px;color:#fff"><span style="letter-spacing:-0.233px">SimpleAssignTest</span></div>
<div class="a" style="left:582px;top:266px;width:206px;height:16px;border:1px dotted #c08040"></div>
<div class="a" style="left:556px;top:282px;width:232px;height:16px;background:#ff6347"></div>
<svg class="a" style="left:559px;top:283px" width="14" height="15"><use href="#tdoc"/></svg>
<div class="t" style="left:581px;top:283px;line-height:16px;color:#000"><span style="letter-spacing:-0.340px">Result</span></div>
<div class="a" style="left:556px;top:298px;width:232px;height:16px;background:#ff6347"></div>
<svg class="a" style="left:546px;top:303px" width="7" height="6"><use href="#ttri"/></svg>
<svg class="a" style="left:562px;top:300px" width="13" height="13"><use href="#tcb"/></svg>
<svg class="a" style="left:578px;top:298px" width="16" height="16"><use href="#tstopf"/></svg>
<div class="t" style="left:600px;top:299px;line-height:16px;color:#000"><span style="letter-spacing:-1.100px">Tests</span></div>
<div class="a" style="left:571px;top:314px;width:217px;height:16px;background:#9acd32"></div>
<svg class="a" style="left:577px;top:316px" width="13" height="13"><use href="#tcb"/></svg>
<svg class="a" style="left:593px;top:314px" width="16" height="16"><use href="#tsmok"/></svg>
<div class="t" style="left:615px;top:315px;line-height:16px;color:#000"><span style="letter-spacing:-0.333px">Global 0.0</span></div>
<div class="a" style="left:571px;top:330px;width:217px;height:16px;background:#9acd32"></div>
<svg class="a" style="left:577px;top:332px" width="13" height="13"><use href="#tcb"/></svg>
<svg class="a" style="left:593px;top:330px" width="16" height="16"><use href="#tsmok"/></svg>
<div class="t" style="left:615px;top:331px;line-height:16px;color:#000"><span style="letter-spacing:-0.857px">Test 1.1</span></div>
<div class="a" style="left:571px;top:346px;width:217px;height:16px;background:#ff6347"></div>
<svg class="a" style="left:577px;top:348px" width="13" height="13"><use href="#tcb"/></svg>
<svg class="a" style="left:593px;top:346px" width="16" height="16"><use href="#tsmfail"/></svg>
<div class="t" style="left:615px;top:347px;line-height:16px;color:#000"><span style="letter-spacing:-0.714px">Test 1.2</span></div>
<div class="a" style="left:571px;top:362px;width:217px;height:16px;background:#9acd32"></div>
<svg class="a" style="left:577px;top:364px" width="13" height="13"><use href="#tcb"/></svg>
<svg class="a" style="left:593px;top:362px" width="16" height="16"><use href="#tsmok"/></svg>
<div class="t" style="left:615px;top:363px;line-height:16px;color:#000"><span style="letter-spacing:-0.857px">Test 1.3</span></div>
<div class="a" style="left:571px;top:378px;width:217px;height:16px;background:#ff6347"></div>
<svg class="a" style="left:577px;top:380px" width="13" height="13"><use href="#tcb"/></svg>
<svg class="a" style="left:593px;top:378px" width="16" height="16"><use href="#tsmfail"/></svg>
<div class="t" style="left:615px;top:379px;line-height:16px;color:#000"><span style="letter-spacing:-0.857px">Test 1.4</span></div>
<div class="a" style="left:571px;top:394px;width:217px;height:16px;background:#ff6347"></div>
<svg class="a" style="left:577px;top:396px" width="13" height="13"><use href="#tcb"/></svg>
<svg class="a" style="left:593px;top:394px" width="16" height="16"><use href="#tsmfail"/></svg>
<div class="t" style="left:615px;top:395px;line-height:16px;color:#000"><span style="letter-spacing:-0.857px">Test 1.5</span></div>
<div class="a" style="left:571px;top:410px;width:217px;height:16px;background:#9acd32"></div>
<svg class="a" style="left:577px;top:412px" width="13" height="13"><use href="#tcb"/></svg>
<svg class="a" style="left:593px;top:410px" width="16" height="16"><use href="#tsmok"/></svg>
<div class="t" style="left:615px;top:411px;line-height:16px;color:#000"><span style="letter-spacing:-0.857px">Test 1.6</span></div>
<div class="a" style="left:571px;top:426px;width:217px;height:16px;background:#9acd32"></div>
<svg class="a" style="left:577px;top:428px" width="13" height="13"><use href="#tcb"/></svg>
<svg class="a" style="left:593px;top:426px" width="16" height="16"><use href="#tsmok"/></svg>
<div class="t" style="left:615px;top:427px;line-height:16px;color:#000"><span style="letter-spacing:-0.857px">Test 1.7</span></div>
<div class="a" style="left:571px;top:442px;width:217px;height:16px;background:#9acd32"></div>
<svg class="a" style="left:577px;top:444px" width="13" height="13"><use href="#tcb"/></svg>
<svg class="a" style="left:593px;top:442px" width="16" height="16"><use href="#tsmok"/></svg>
<div class="t" style="left:615px;top:443px;line-height:16px;color:#000"><span style="letter-spacing:-0.350px">Global Exit</span></div>


</body></html>
